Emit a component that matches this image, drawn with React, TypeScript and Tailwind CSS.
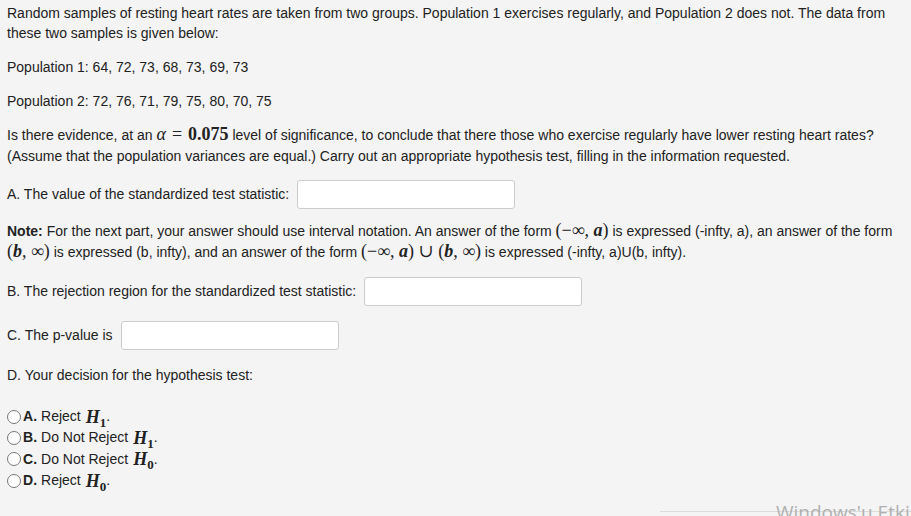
import React from "react";

const M = ({ children, className = "" }: { children: React.ReactNode; className?: string }) => (
  <span className={`font-['Liberation_Serif','DejaVu_Serif',serif] text-[18px] leading-none ${className}`}>{children}</span>
);

const Input = () => (
  <span className="block w-[218px] h-[29px] bg-white border border-[#cccccc] rounded-[3px]" />
);

const Radio = ({ letter, text, sub }: { letter: string; text: string; sub: string }) => (
  <div className="flex items-center h-[21.3px]">
    <span className="inline-block w-[14px] h-[14px] rounded-full border border-[#777] bg-white ml-[7px] mr-[2px]" />
    <b>{letter}.</b>
    <span className="ml-[4px]">{text}</span>
    <M className="ml-[5px] italic font-bold">
      H
      <span className="relative top-[4px] text-[13px] not-italic font-bold">{sub}</span>
    </M>
    <span>.</span>
  </div>
);

export default function App() {
  return (
    <div className="relative w-[911px] h-[516px] overflow-hidden bg-[#f4f4f4] text-[#222] font-['Liberation_Sans',Arial,sans-serif] text-[14px]">
      <div className="px-[7px] pt-[3px]">
        <p className="leading-[20px]">
          Random samples of resting heart rates are taken from two groups. Population 1 exercises regularly, and Population 2 does not. The data from these two samples is given below:
        </p>
        <p className="leading-[20px] mt-[14px]">Population 1: 64, 72, 73, 68, 73, 69, 73</p>
        <p className="leading-[20px] mt-[14px]">Population 2: 72, 76, 71, 79, 75, 80, 70, 75</p>
        <p className="leading-[21px] mt-[14px]">
          Is there evidence, at an <M className="italic">α</M><M className="mx-[6px]">=</M><M className="font-bold">0.075</M> level of significance, to conclude that there those who exercise regularly have lower resting heart rates? (Assume that the population variances are equal.) Carry out an appropriate hypothesis test, filling in the information requested.
        </p>
        <div className="mt-[13px] h-[29px] flex items-center">
          <span>A. The value of the standardized test statistic:</span>
          <span className="ml-[8px]"><Input /></span>
        </div>
        <p className="leading-[21px] mt-[12px]">
          <b>Note:</b> For the next part, your answer should use interval notation. An answer of the form <M>(−∞, <b><i>a</i></b>)</M> is expressed (-infty, a), an answer of the form <M>(<b><i>b</i></b>, ∞)</M> is expressed (b, infty), and an answer of the form <M>(−∞, <b><i>a</i></b>) ∪ (<b><i>b</i></b>, ∞)</M> is expressed (-infty, a)U(b, infty).
        </p>
        <div className="mt-[14px] h-[29px] flex items-center">
          <span>B. The rejection region for the standardized test statistic:</span>
          <span className="ml-[8px]"><Input /></span>
        </div>
        <div className="mt-[15px] h-[29px] flex items-center">
          <span>C. The p-value is</span>
          <span className="ml-[8px]"><Input /></span>
        </div>
        <p className="leading-[20px] mt-[15px]">D. Your decision for the hypothesis test:</p>
      </div>
      <div className="mt-[21px]">
        <Radio letter="A" text="Reject" sub="1" />
        <Radio letter="B" text="Do Not Reject" sub="1" />
        <Radio letter="C" text="Do Not Reject" sub="0" />
        <Radio letter="D" text="Reject" sub="0" />
      </div>
      <div className="absolute left-[660px] right-0 top-[511px] h-px bg-[#dcdcdc]" />
      <div className="absolute left-[776px] top-[503px] text-[19px] text-[#b0b0b0] font-['Open_Sans',sans-serif] leading-none whitespace-nowrap">
        Windows'u Etkinleştir
      </div>
    </div>
  );
}
